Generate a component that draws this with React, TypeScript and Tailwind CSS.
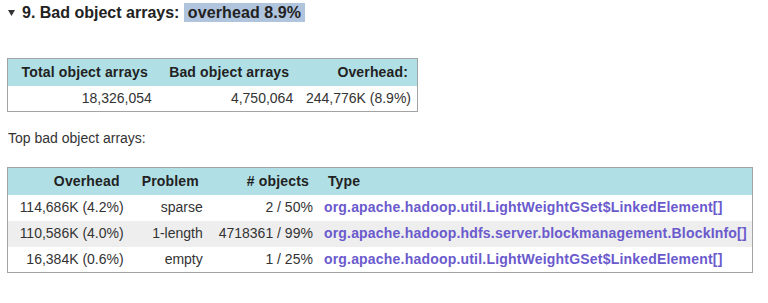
import React from 'react';

interface BadArrayRow {
  overhead: string;
  problem: string;
  objects: string;
  type: string;
}

const TOP_BAD_ARRAYS: BadArrayRow[] = [
  { overhead: '114,686K (4.2%)', problem: 'sparse', objects: '2 / 50%', type: 'org.apache.hadoop.util.LightWeightGSet$LinkedElement[]' },
  { overhead: '110,586K (4.0%)', problem: '1-length', objects: '4718361 / 99%', type: 'org.apache.hadoop.hdfs.server.blockmanagement.BlockInfo[]' },
  { overhead: '16,384K (0.6%)', problem: 'empty', objects: '1 / 25%', type: 'org.apache.hadoop.util.LightWeightGSet$LinkedElement[]' },
];

const SummaryTable: React.FC = () => {
  return (
    <table className="table-fixed border-collapse border border-[#a3a3a3] w-[411px] text-[14px] text-[#333]">
      <thead>
        <tr className="bg-[#b0e0e6] h-[27px] tracking-[0.15px]">
          <th className="w-[148px] p-0 pr-[8px] text-right font-bold text-[#222] whitespace-nowrap">Total object arrays</th>
          <th className="w-[141px] p-0 pr-[8px] text-right font-bold text-[#222] whitespace-nowrap">Bad object arrays</th>
          <th className="w-[120px] p-0 pr-[9px] text-right font-bold text-[#222] whitespace-nowrap">Overhead:</th>
        </tr>
      </thead>
      <tbody>
        <tr className="h-[26px] bg-white">
          <td className="p-0 pr-[4px] text-right whitespace-nowrap">18,326,054</td>
          <td className="p-0 pr-[4px] text-right whitespace-nowrap">4,750,064</td>
          <td className="p-0 pr-[6px] text-right whitespace-nowrap">244,776K (8.9%)</td>
        </tr>
      </tbody>
    </table>
  );
};

const TopArraysTable: React.FC = () => {
  return (
    <table className="table-fixed border-collapse border border-[#a3a3a3] w-[746px] text-[14px] text-[#333]">
      <thead>
        <tr className="bg-[#b0e0e6] h-[27px] tracking-[0.15px]">
          <th className="w-[120px] p-0 pr-[8px] text-right font-bold text-[#222]">Overhead</th>
          <th className="w-[79px] p-0 pr-[8px] text-right font-bold text-[#222]">Problem</th>
          <th className="w-[110px] p-0 pr-[8px] text-right font-bold text-[#222]"># objects</th>
          <th className="w-[435px] p-0 pl-[11px] text-left font-bold text-[#222]">Type</th>
        </tr>
      </thead>
      <tbody>
        {TOP_BAD_ARRAYS.map((row, i) => (
          <tr key={i} className={`h-[26px] ${i % 2 === 1 ? 'bg-[#eeeeee]' : 'bg-white'}`}>
            <td className="p-0 pr-[4px] text-right whitespace-nowrap">{row.overhead}</td>
            <td className="p-0 pr-[4px] text-right whitespace-nowrap">{row.problem}</td>
            <td className="p-0 pr-[4px] text-right whitespace-nowrap">{row.objects}</td>
            <td className="p-0 pl-[7px] text-left whitespace-nowrap">
              {/* bold Helvetica in the original runs a little wider than Liberation */}
              <a href="#" className="font-bold text-[#6a5acd] no-underline tracking-[0.2px]">{row.type}</a>
            </td>
          </tr>
        ))}
      </tbody>
    </table>
  );
};

export default function App() {
  return (
    <div className="w-[768px] h-[303px] bg-white overflow-hidden" style={{ fontFamily: '"Liberation Sans", Arial, sans-serif' }}>
      <div className="pt-[3px] pl-[8px] flex items-center h-[22px] text-[16px] leading-[19px] font-bold text-[#222]">
        <svg width="7" height="6" viewBox="0 0 7 6" className="mr-[7px] mt-[1px]">
          <polygon points="0,0 7,0 3.5,6" fill="#333" />
        </svg>
        <span className="whitespace-pre">9. Bad object arrays: </span>
        <span className="bg-[#b0c4de] px-[4px] h-[19px] tracking-[0.1px]">overhead 8.9%</span>
      </div>

      <div className="pl-[7px] mt-[36px]">
        <SummaryTable />
      </div>

      <div className="pl-[8px] mt-[18px] text-[14px] leading-[16px] text-[#333]">Top bad object arrays:</div>

      <div className="pl-[7px] mt-[21px]">
        <TopArraysTable />
      </div>
    </div>
  );
}
